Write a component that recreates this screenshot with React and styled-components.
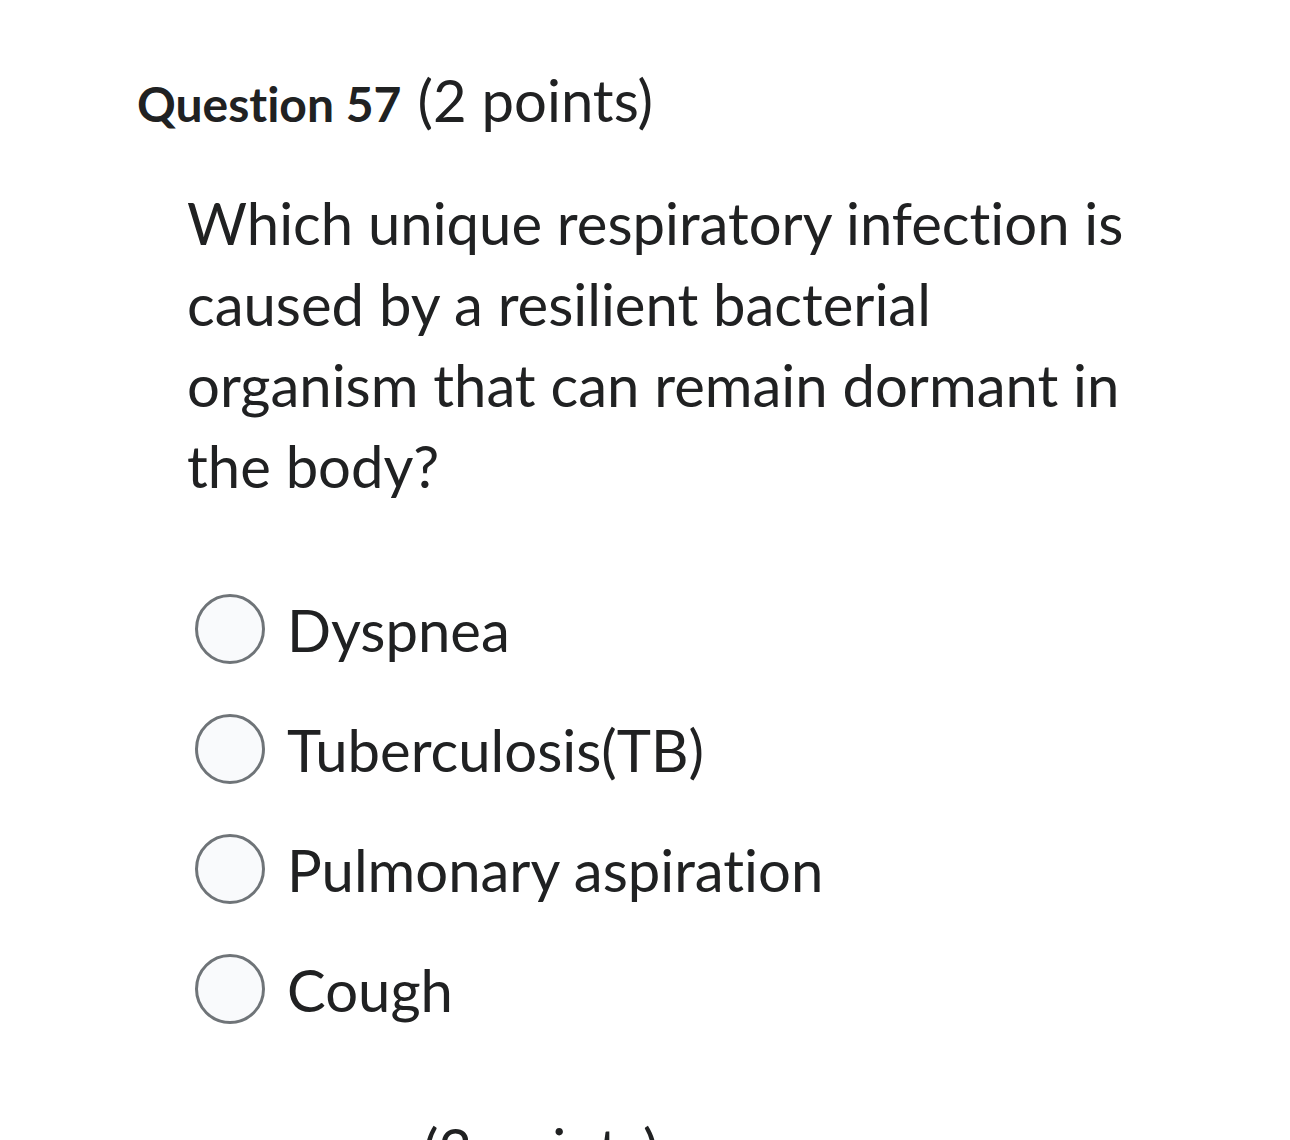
import React from "react";
import styled, { createGlobalStyle } from "styled-components";

const Global = createGlobalStyle`
  html, body { margin: 0; padding: 0; background: #ffffff; }
  body {
    font-family: Lato, "Open Sans", sans-serif;
    color: #202122;
    font-variant-ligatures: none;
    font-feature-settings: "liga" 0, "clig" 0, "dlig" 0;
  }
`;

const Page = styled.div`
  width: 1290px;
  height: 1140px;
  overflow: hidden;
  box-sizing: border-box;
  padding: 62px 0 0 137px;
`;

const Title = styled.h2`
  margin: 0;
  font-size: 48px;
  line-height: 76px;
  font-weight: 400;
  color: #202122;
`;

const Strong = styled.span`
  font-weight: 700;
  margin-right: 4px;
`;

const Points = styled.span`
  font-size: 58px;
`;

const Body = styled.div`
  padding-left: 50px;
  margin-top: 40px;
`;

const Prompt = styled.p`
  margin: 0;
  width: 960px;
  font-size: 58px;
  line-height: 81px;
`;

const Options = styled.div`
  display: flex;
  flex-direction: column;
  margin-top: 63px;
  padding-left: 8px;
`;

const Option = styled.label`
  display: flex;
  align-items: center;
  gap: 22px;
  height: 120px;
  font-size: 58px;
`;

const Radio = styled.span`
  width: 64px;
  height: 64px;
  border-radius: 50%;
  border: 3px solid #6f7478;
  background: #f9fafc;
  flex: none;
`;

const Next = styled.div`
  margin-top: 70px;
  padding-left: 286px;
  font-size: 58px;
  line-height: 60px;
`;

const options = ["Dyspnea", "Tuberculosis(TB)", "Pulmonary aspiration", "Cough"];

export default function App() {
  return (
    <Page>
      <Global />
      <Title>
        <Strong>Question 57</Strong> <Points>(2 points)</Points>
      </Title>
      <Body>
        <Prompt>
          Which unique respiratory infection is caused by a resilient bacterial organism that can remain dormant in the body?
        </Prompt>
        <Options>
          {options.map((o) => (
            <Option key={o}>
              <Radio />
              {o}
            </Option>
          ))}
        </Options>
      </Body>
      <Next>(2 points)</Next>
    </Page>
  );
}
